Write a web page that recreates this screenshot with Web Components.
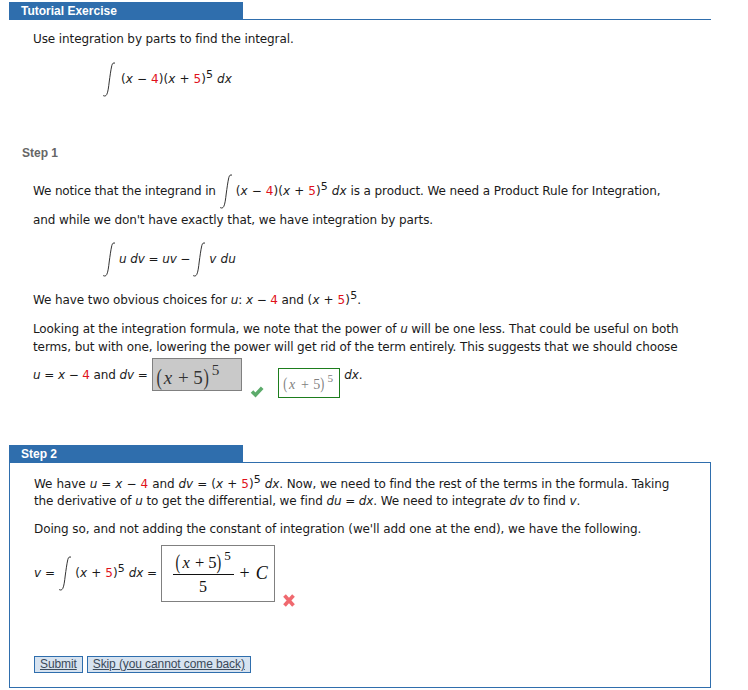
<!DOCTYPE html>
<html>
<head>
<meta charset="utf-8">
<title>Tutorial Exercise</title>
<style>
    html, body {
        margin: 0;
        padding: 0;
        background: white;
    }
    body {
        font-family: "DejaVu Sans", Verdana, sans-serif;
        font-size: 12px;
        color: #1a1a1a;
    }
    tutorial-page {
        width: 748px;
        height: 690px;
    }
</style>
</head>
<body>

<template id="bar-tpl">
<style>
    :host {
        display: block;
        border-bottom: 1px solid #2f6ead;
    }
    div {
        width: 222px;
        height: 17px;
        padding-left: 12px;
        background-color: #2f6ead;
        color: white;
        font: bold 12px/18px "Liberation Sans", Arial, sans-serif;
        letter-spacing: 0;
    }
</style>
<div><slot></slot></div>
</template>

<template id="int-tpl">
<style>
    :host {
        display: inline-flex;
        align-items: center;
        vertical-align: middle;
        margin: 0 var(--int-right, 3px) 0 var(--int-left, 4px);
        white-space: normal;
    }
    svg {
        display: block;
    }
</style>
<svg width="14" height="35" viewBox="0 0 14 35">
    <path d="M13 1.2C11.6 .4 10.4 1.2 9.8 3.6 8.8 8 8 14 7.2 20 6.6 25 6 30 4.8 32.4 4 34 2.6 34.4 1.2 33.6" fill="none" stroke="#333" stroke-width="1"/>
</svg>
</template>

<template id="pow-tpl"><style>
    :host { display: inline; white-space: normal; letter-spacing: .1px; }
    i { font-style: italic; }
    .n { color: #e0111b; }
    sup {
        font-size: 11px;
        line-height: 0;
        vertical-align: 5px;
    }
</style><span>(<i>x</i> + <span class="n">5</span>)<sup>5</sup></span></template>

<!-- the typeset (x + 5)^5, em based so one element serves all the sizes -->
<template id="tex-tpl"><style>
    :host {
        display: inline-block;
        white-space: nowrap;
        letter-spacing: 0;
        font-family: "Liberation Serif", "Times New Roman", serif;
    }
    .p {
        display: inline-block;
        transform: scale(.85, 1.25);
        transform-origin: 50% 62%;
    }
    i { margin: 0 calc(var(--g, 1) * .06em) 0 calc(var(--g, 1) * .08em); }
    .o { margin: 0 calc(var(--g, 1) * .2em); }
    sup {
        font-size: .8em;
        line-height: 0;
        vertical-align: .6em;
        margin-left: calc(var(--g, 1) * .14em);
    }
</style><span class="p">(</span><i>x</i><span class="o">+</span>5<span class="p">)</span><sup>5</sup></template>

<template id="box-tpl">
<style>
    :host {
        display: inline-block;
        vertical-align: top;
        box-sizing: border-box;
        white-space: normal;
        letter-spacing: 0;
        font-family: "Liberation Serif", "Times New Roman", serif;
    }
    :host([kind="gray"]) {
        width: 90px;
        height: 33px;
        background: #c9c9c9;
        border: 1px solid #808080;
        padding: 3px 0 0 3px;
        font-size: 19px;
        line-height: 31px;
        color: #333;
        --g: 1.2;
    }
    :host([kind="good"]) {
        width: 62px;
        height: 30px;
        border: 1px solid #1d7d1d;
        padding: 2px 0 0 4px;
        font-size: 14px;
        line-height: 27px;
        color: #808080;
        --g: 1.6;
    }
    :host([kind="open"]) {
        width: 114px;
        height: 57px;
        border: 1px solid #808080;
        color: #111;
        --g: 1.2;
    }
</style>
<slot></slot>
</template>

<template id="btn-tpl">
<style>
    :host {
        display: inline-block;
    }
    button {
        display: block;
        height: 17px;
        padding: 0 5px;
        background: #d7e3f0;
        border: 1px solid #2f6ead;
        border-radius: 0;
        color: #3b4a5a;
        font: 12px/15px "Liberation Sans", Arial, sans-serif;
        letter-spacing: -0.1px;
        text-decoration: underline;
    }
</style>
<button type="button"><slot></slot></button>
</template>

<template id="mark-tpl">
<style>
    :host {
        display: inline-block;
        vertical-align: top;
        white-space: normal;
    }
    svg { display: block; }
</style>
<svg width="14" height="13" viewBox="0 0 14 13"></svg>
</template>

<template id="page-tpl">
<style>
    :host {
        display: block;
        box-sizing: border-box;
        padding: 2px 37px 0 9px;
        line-height: 17px;
        letter-spacing: -0.1px;
    }
    i { font-style: italic; }
    .n { color: #e0111b; }
    .m { letter-spacing: .1px; }
    sup {
        font-size: 11px;
        line-height: 0;
        vertical-align: 5px;
    }
    .body {
        padding-left: 24px;
    }
    p {
        margin: 0;
    }
    .formula {
        display: flex;
        align-items: center;
        height: 35px;
        padding-left: 65px;
    }
    .step1 {
        margin: 0 0 0 13px;
        height: 14px;
        color: #666;
        font: bold 12px/14px "Liberation Sans", Arial, sans-serif;
        letter-spacing: 0;
    }
    .inline {
        display: flex;
        align-items: center;
        height: 35px;
        white-space: pre;
        --int-left: 3px;
    }
    .choose {
        display: flex;
        align-items: flex-start;
        white-space: pre;
    }
    .panel {
        box-sizing: border-box;
        height: 225px;
        border: 1px solid #2f6ead;
        border-top: 0;
        padding: 13px 24px 0 24px;
    }
    .eq {
        display: flex;
        align-items: center;
        white-space: pre;
        margin-top: 7px;
        height: 57px;
    }
    .frac {
        display: inline-flex;
        flex-direction: column;
        align-items: center;
        width: 61px;
        margin-left: 11px;
        font-size: 16.5px;
        line-height: 22px;
    }
    .frac span {
        width: 100%;
        text-align: center;
    }
    .frac span + span {
        border-top: 1px solid #111;
        line-height: 17px;
        padding-top: 3px;
        font-size: 16px;
    }
    .open-inner {
        display: flex;
        align-items: center;
        height: 100%;
        font-size: 18px;
        white-space: nowrap;
    }
    .open-inner i { margin-left: 6px; }
    .actions {
        display: flex;
        gap: 4px;
        margin-top: 54px;
    }
</style>

<tutorial-bar>Tutorial Exercise</tutorial-bar>

<div class="body">
    <p style="margin-top:11px">Use integration by parts to find the integral.</p>
    <div class="formula" style="margin-top:14px;--int-right:5px">
        <math-int></math-int>
        <span class="m">(<i>x</i> − <span class="n">4</span>)(<i>x</i> + <span class="n">5</span>)<sup>5</sup> <i>dx</i></span>
    </div>
</div>

<p class="step1" style="margin-top:49px">Step 1</p>

<div class="body">
    <div class="inline" style="margin-top:14px"><span style="letter-spacing:-.16px">We notice that the integrand in</span><math-int></math-int><span><span class="m">(<i>x</i> − <span class="n">4</span>)(<i>x</i> + <span class="n">5</span>)<sup>5</sup> <i>dx</i></span> is a product. We need a Product Rule for Integration,</span></div>
    <p style="margin-top:3px">and while we don't have exactly that, we have integration by parts.</p>
    <div class="formula" style="margin-top:13px">
        <math-int></math-int>
        <span style="white-space:pre"><i>u dv</i> = <i>uv</i> −</span>
        <math-int style="--int-left:2px"></math-int>
        <span class="m" style="white-space:pre"><i>v du</i></span>
    </div>
    <p style="margin-top:15px">We have two obvious choices for <i>u</i>: <i>x</i> − <span class="n">4</span> and <math-pow></math-pow>.</p>
    <p style="margin-top:11px;line-height:18px">Looking at the integration formula, we note that the power of <i>u</i> will be one less. That could be useful on both<br>terms, but with one, lowering the power will get rid of the term entirely. This suggests that we should choose</p>
    <div class="choose" style="margin-top:2px">
        <span style="margin-top:9px"><i>u</i> = <i>x</i> − <span class="n">4</span> and <i>dv</i> = </span>
        <answer-box kind="gray"><tex-power></tex-power></answer-box>
        <check-mark style="margin:27px 0 0 8px"></check-mark>
        <answer-box kind="good" style="margin:10px 0 0 14px"><tex-power></tex-power></answer-box>
        <span style="margin:9px 0 0 1px"> <i>dx</i>.</span>
    </div>
</div>

<tutorial-bar style="margin-top:47px">Step 2</tutorial-bar>

<div class="panel">
    <p><span style="word-spacing:.4px">We have <i>u</i> = <i>x</i> − <span class="n">4</span> and <i>dv</i> = </span><math-pow></math-pow> <i>dx</i>. Now, we need to find the rest of the terms in the formula. Taking<br>the derivative of <i>u</i> to get the differential, we find <i>du</i> = <i>dx</i>. We need to integrate <i>dv</i> to find <i>v</i>.</p>
    <p style="margin-top:11px">Doing so, and not adding the constant of integration (we'll add one at the end), we have the following.</p>
    <div class="eq" style="--int-left:3px">
        <span class="m"><i>v</i> =</span><math-int></math-int><span><math-pow></math-pow> <i>dx</i> = </span>
        <answer-box kind="open">
            <div class="open-inner">
                <span class="frac"><span><tex-power></tex-power></span><span>5</span></span>
                <span style="margin-left:6px">+</span><i>C</i>
            </div>
        </answer-box>
        <cross-mark style="margin:54px 0 0 7px"></cross-mark>
    </div>
    <div class="actions">
        <ui-button>Submit</ui-button>
        <ui-button>Skip (you cannot come back)</ui-button>
    </div>
</div>
</template>

<tutorial-page></tutorial-page>

<script>
    // every element just clones its template into an open shadow root
    class TemplateElement extends HTMLElement {
        constructor(id) {
            super();
            this.shadow = this.attachShadow({mode: "open"});
            this.shadow.append(document.getElementById(id).content.cloneNode(true));
        }
    }

    class TutorialBar extends TemplateElement {
        constructor() { super('bar-tpl'); }
    }
    class MathInt extends TemplateElement {
        constructor() { super('int-tpl'); }
    }
    class MathPow extends TemplateElement {
        constructor() { super('pow-tpl'); }
    }
    class TexPower extends TemplateElement {
        constructor() { super('tex-tpl'); }
    }
    class AnswerBox extends TemplateElement {
        constructor() { super('box-tpl'); }
    }
    class UiButton extends TemplateElement {
        constructor() { super('btn-tpl'); }
    }
    class CheckMark extends TemplateElement {
        constructor() {
            super('mark-tpl');
            this.shadow.querySelector('svg').innerHTML =
                '<path d="M2 6.5 L5.5 10 L12.2 2.8" fill="none" stroke="#5cab6b" stroke-width="3.6"/>';
        }
    }
    class CrossMark extends TemplateElement {
        constructor() {
            super('mark-tpl');
            this.shadow.querySelector('svg').innerHTML =
                '<path d="M2.5 1.5 L11.5 11.5 M11.5 1.5 L2.5 11.5" fill="none" stroke="#f0696f" stroke-width="3.6"/>';
        }
    }
    class TutorialPage extends TemplateElement {
        constructor() { super('page-tpl'); }
    }

    window.customElements.define('tutorial-bar', TutorialBar);
    window.customElements.define('math-int', MathInt);
    window.customElements.define('math-pow', MathPow);
    window.customElements.define('tex-power', TexPower);
    window.customElements.define('answer-box', AnswerBox);
    window.customElements.define('ui-button', UiButton);
    window.customElements.define('check-mark', CheckMark);
    window.customElements.define('cross-mark', CrossMark);
    window.customElements.define('tutorial-page', TutorialPage);
</script>
</body>
</html>
